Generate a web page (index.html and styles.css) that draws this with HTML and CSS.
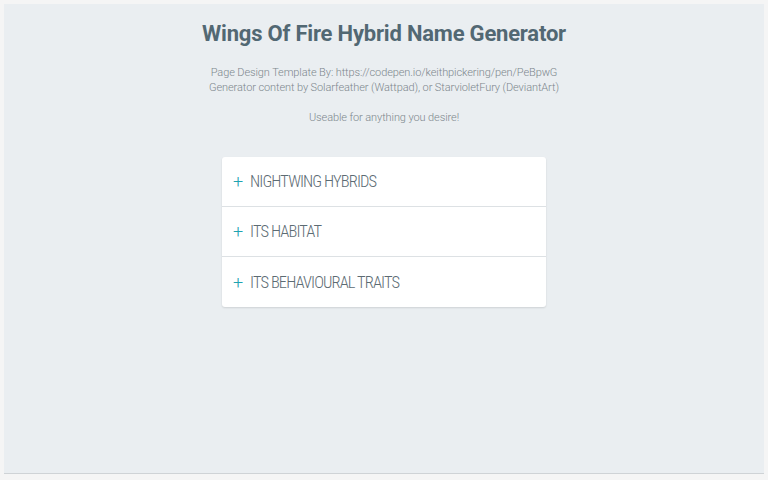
FILE: index.html
```html
<!DOCTYPE html>
<html lang="en">
<head>
    <meta charset="UTF-8">
    <meta name="viewport" content="width=device-width, initial-scale=1.0">
    <title>Wings Of Fire Hybrid Name Generator</title>
    <link rel="stylesheet" href="styles.css">
</head>
<body>
    <div class="page">
        <h1 class="title">Wings Of Fire Hybrid Name Generator</h1>
        <p class="credits">
            Page Design Template By: https://codepen.io/keithpickering/pen/PeBpwG<br>
            Generator content by Solarfeather (Wattpad), or StarvioletFury (DeviantArt)
        </p>
        <p class="credits">Useable for anything you desire!</p>

        <div class="accordion">
            <div class="item">
                <span class="plus">+</span>
                <span class="label">Nightwing Hybrids</span>
            </div>
            <div class="item">
                <span class="plus">+</span>
                <span class="label">Its Habitat</span>
            </div>
            <div class="item">
                <span class="plus">+</span>
                <span class="label">Its Behavioural Traits</span>
            </div>
        </div>
    </div>
</body>
</html>
```

FILE: styles.css
```css
* {
    margin: 0;
    padding: 0;
    box-sizing: border-box;
}

body {
    background-color: #f5f5f5;
    padding: 4px;
    font-family: Roboto, "Liberation Sans", sans-serif;
}

.page {
    height: 470px;
    background-color: #eaeef1;
    border-bottom: 1px solid #cfd3d6;
    padding-top: 18px;
    text-align: center;
}

.title {
    font-size: 22px;
    font-weight: 700;
    color: #526873;
    letter-spacing: -0.2px;
    line-height: 24px;
    margin-bottom: 19px;
}

.credits {
    font-size: 11px;
    font-weight: 300;
    line-height: 15px;
    letter-spacing: -0.1px;
    color: #7d878d;
    margin-bottom: 15px;
}

.accordion {
    width: 324px;
    margin: 32px auto 0;
    background-color: #fff;
    border-radius: 3px;
    box-shadow: 0 1px 2px rgba(0, 0, 0, 0.12);
    text-align: left;
}

.item {
    display: flex;
    align-items: center;
    height: 50px;
    padding-left: 11px;
    border-bottom: 1px solid #dde1e4;
}

.item:last-child {
    border-bottom: none;
}

.plus {
    width: 17px;
    font-size: 18px;
    font-weight: 300;
    color: #1fa3b0;
}

.label {
    font-family: Roboto, "DejaVu Sans Condensed", sans-serif;
    font-stretch: 75%;
    font-weight: 300;
    font-size: 16.5px;
    letter-spacing: -0.9px;
    text-transform: uppercase;
    color: #5c6b73;
}
```
